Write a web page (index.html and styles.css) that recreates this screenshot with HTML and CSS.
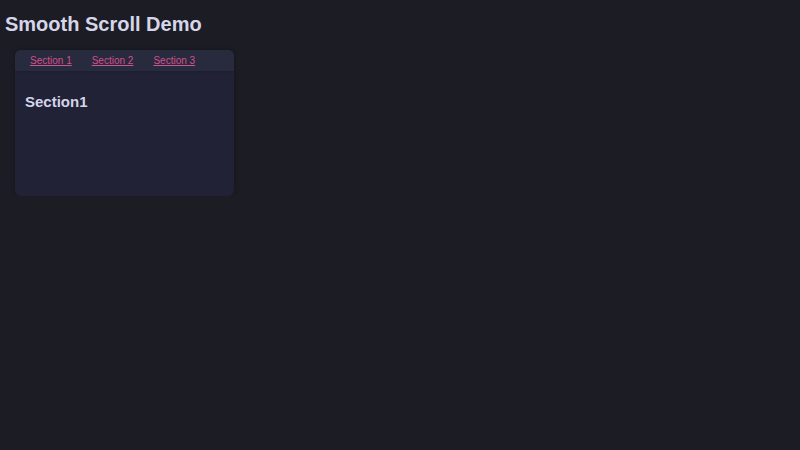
FILE: index.html
```html
<!DOCTYPE html>
<html lang="en">
<head>
<meta charset="utf-8">
<title>Smooth Scroll Demo</title>
<link rel="stylesheet" href="styles.css">
</head>
<body>
<h1 class="title">Smooth Scroll Demo</h1>
<div class="card">
  <nav class="nav">
    <a href="#s1">Section 1</a>
    <a href="#s2">Section 2</a>
    <a href="#s3">Section 3</a>
  </nav>
  <div class="content">
    <section id="s1" class="section"><h2>Section1</h2></section>
  </div>
</div>
</body>
</html>
```
FILE: styles.css
```css
html, body {
  margin: 0;
  background: #1c1c24;
  font-family: "Liberation Sans", Arial, sans-serif;
}
body {
  padding: 13px 0 0 5px;
}
.title {
  margin: 0;
  font-size: 20px;
  line-height: 23px;
  font-weight: bold;
  color: #d6d6ea;
}
.card {
  margin: 14px 0 0 10px;
  width: 219px;
  height: 146px;
  background: #222236;
  border-radius: 6px;
  overflow: hidden;
  box-shadow: 0 0 4px rgba(0,0,0,0.3);
}
.nav {
  display: flex;
  gap: 20px;
  height: 21px;
  align-items: center;
  padding: 0 15px;
  background: #282a3e;
  box-shadow: 0 1px 2px rgba(0,0,0,0.15);
}
.nav a {
  font-size: 10px;
  color: #d2508c;
  text-decoration: underline;
}
.content {
  padding: 0 10px;
}
.section h2 {
  margin: 0;
  padding-top: 22px;
  font-size: 15px;
  line-height: 18px;
  font-weight: bold;
  color: #d4d4ea;
}
```
